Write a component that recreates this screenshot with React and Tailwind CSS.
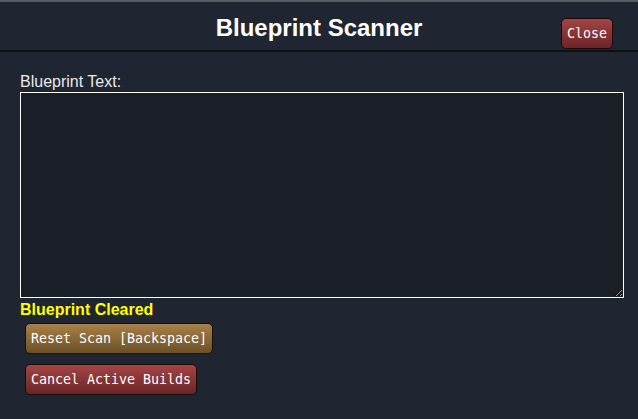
export default function App() {
  return (
    <div className="w-[638px] h-[419px] bg-[#1f2631] border-t-2 border-[#5a5d60] flex flex-col overflow-hidden font-['Liberation_Sans',Arial,sans-serif]">
      {/* Header */}
      <header className="relative h-[50px] shrink-0 flex items-center justify-center border-b-2 border-[#0d1015]">
        <h1 className="text-white font-bold text-[24px] leading-none mt-[3px]">Blueprint Scanner</h1>
        <button className="absolute right-[25px] top-[16px] h-[31px] px-[5px] rounded-[5px] border border-[#1a0a0a] bg-gradient-to-b from-[#a54545] to-[#6b2528] text-white text-[13.3px] font-['DejaVu_Sans_Mono',monospace]">
          Close
        </button>
      </header>

      {/* Body */}
      <main className="flex flex-col px-[20px] pt-[20px]">
        <label className="text-[#e8eaec] text-[16px] leading-[19px]">Blueprint Text:</label>
        <textarea
          className="mt-[1px] w-[604px] h-[206px] bg-[#1a1f27] border border-white text-white outline-none resize"
          defaultValue=""
        />
        <p className="text-[#ffff00] font-bold text-[16px] leading-[19px] mt-[2px]">Blueprint Cleared</p>
        <div className="flex flex-col items-start gap-[10px] mt-[4px] pl-[5px]">
          <button className="h-[31px] px-[5px] rounded-[5px] border border-[#1a1208] bg-gradient-to-b from-[#a9804a] to-[#6b5126] text-white text-[13.3px] font-['DejaVu_Sans_Mono',monospace]">
            Reset Scan [Backspace]
          </button>
          <button className="h-[31px] px-[5px] rounded-[5px] border border-[#1a0a0a] bg-gradient-to-b from-[#a54545] to-[#6b2528] text-white text-[13.3px] font-['DejaVu_Sans_Mono',monospace]">
            Cancel Active Builds
          </button>
        </div>
      </main>
    </div>
  );
}
